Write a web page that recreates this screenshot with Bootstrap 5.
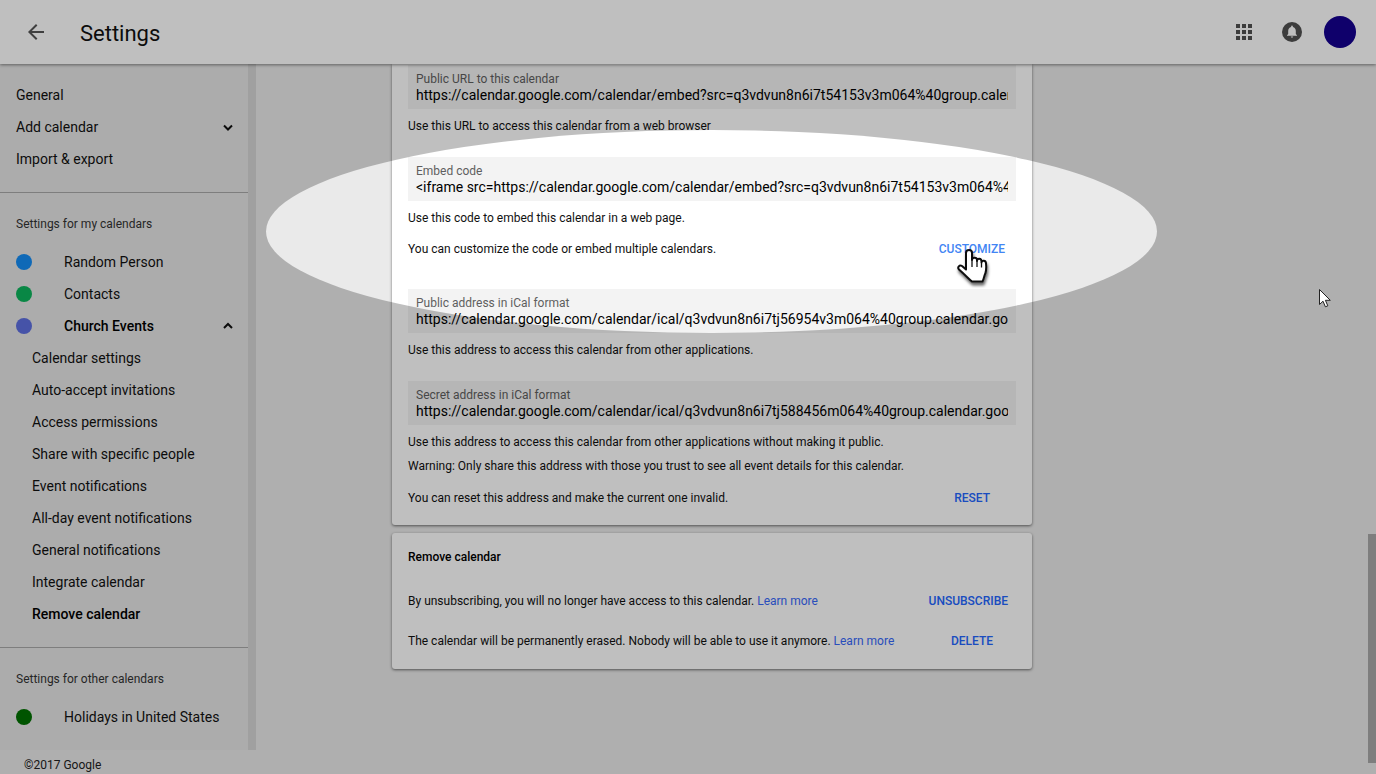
<!DOCTYPE html>
<html lang="en">
<head>
<meta charset="utf-8">
<title>Settings</title>
<link href="https://cdn.jsdelivr.net/npm/bootstrap@5.3.0/dist/css/bootstrap.min.css" rel="stylesheet">
<style>
html,body{height:100%;}
body{font-family:Roboto,"Liberation Sans",sans-serif;font-size:14px;color:#111;background:#eaeaea;overflow:hidden;position:relative;}
.shell{height:774px;}
.topbar{height:64px;background:#fff;padding:0 20px 0 16px;box-shadow:0 1px 3px rgba(0,0,0,.45);z-index:2;flex:none;}
.topbar h1{font-size:22px;font-weight:400;margin:3px 0 0 24px;line-height:62px;color:#111;}
.backbtn{width:40px;display:flex;justify-content:center;}
.appicons{gap:24px;}
.avatar{width:32px;height:32px;border-radius:50%;background:#14008f;margin-left:-4px;}
.sidecol{width:256px;flex:none;}
.sidewrap{height:686px;}
.sidenav{width:248px;background:#e6e6e6;padding-top:15px;flex:none;}
.sidetrack{width:8px;background:#d6d6d6;flex:none;}
.sideitem{height:32px;padding:0 8px 0 16px;display:flex;align-items:center;justify-content:space-between;color:#111;text-decoration:none;}
.sideitem.sub{padding-left:32px;}
.sideitem.strong{font-weight:500;color:#000;}
.withdot{justify-content:flex-start;}
.dot{width:16px;height:16px;border-radius:50%;margin-right:32px;flex:none;}
.sidehr{border:0;border-top:1px solid #a8a8a8;margin:17px 0 0;opacity:1;}
.sidehead{font-size:12px;color:#333;padding:0 16px;line-height:16px;margin:23px 0 14px;}
.foot{font-size:12px;color:#222;padding-left:24px;line-height:30px;}
.mainscroll{padding-left:136px;position:relative;}
.panel{width:640px;background:#fff;box-shadow:0 1px 3px rgba(0,0,0,.55);padding:1px 16px 0;border-radius:0 0 3px 3px;}
.panel2{margin-top:8px;border-radius:3px;height:136px;padding-top:0;}
.field{background:#f3f3f3;height:44px;padding:6px 8px 0;width:608px;}
.field label{display:block;font-size:12px;line-height:16px;color:#5f5f5f;margin:0 0 -1px;}
.field div{font-size:14px;line-height:18px;color:#000;white-space:nowrap;overflow:hidden;}
.hint{font-size:12px;line-height:16px;color:#111;}
.hintrow{height:32px;margin-top:7px;}
.actionbtn{font-size:12px;font-weight:500;color:#2366ff;text-decoration:none;text-align:center;}
.actionbtn.lit{color:#4285f4;margin-right:11px;}
.inlinelink{color:#3768fa;text-decoration:none;}
.paneltitle{font-size:12px;font-weight:500;color:#000;line-height:16px;padding-top:16px;}
.thumb{position:absolute;left:1368px;right:0;top:534px;height:229px;background:#a8a8a8;}
.spot{position:absolute;left:266px;top:130px;width:891px;height:203px;border-radius:50%;box-shadow:0 0 0 1400px rgba(0,0,0,.25);z-index:5;pointer-events:none;}
.spotclip{position:absolute;inset:0;overflow:hidden;z-index:5;pointer-events:none;}
.cursor{position:absolute;z-index:6;}
.handpos{left:950px;top:245px;}
.arrowpos{left:1318px;top:288px;}
.gap8{margin-top:8px;}
.gap9{margin-top:9px;}
.gap23{margin-top:23px;}
</style>
</head>
<body>
<div class="shell d-flex flex-column">
  <header class="topbar d-flex align-items-center">
    <span class="backbtn"><svg width="24" height="24" viewBox="0 0 24 24" fill="#555"><path d="M20 11H7.830l5.590-5.590L12 4l-8 8 8 8 1.410-1.410L7.830 13H20z"/></svg></span>
    <h1>Settings</h1>
    <div class="d-flex align-items-center appicons ms-auto">
      <svg width="24" height="24" viewBox="0 0 24 24" fill="#505050"><path d="M4 8h4V4H4zm6 12h4v-4h-4zm-6 0h4v-4H4zm0-6h4v-4H4zm6 0h4v-4h-4zm6-10v4h4V4zm-6 4h4V4h-4zm6 6h4v-4h-4zm0 6h4v-4h-4z"/></svg>
      <svg width="24" height="24" viewBox="0 0 24 24"><circle cx="12" cy="12" r="10" fill="#505050"/><path fill="#fff" d="M12 5.600c-.5 0-.9.4-.9.9v.4C9.300 7.300 8.200 8.900 8.200 10.800v3.200L7 15.200v.6h10v-.6L15.800 14v-3.200c0-1.900-1.100-3.500-2.900-3.900v-.4c0-.5-.4-.9-.9-.9zM10.800 16.600c0 .7.5 1.200 1.200 1.200s1.200-.5 1.200-1.200z"/></svg>
      <span class="avatar"></span>
    </div>
  </header>
  <div class="d-flex flex-grow-1">
    <div class="sidecol d-flex flex-column">
      <div class="sidewrap d-flex">
        <nav class="sidenav">
          <a class="sideitem">General</a>
          <a class="sideitem">Add calendar <svg width="24" height="24" viewBox="0 0 24 24" fill="none" stroke="#111" stroke-width="2"><path d="M8 10.500l4 4 4-4"/></svg></a>
          <a class="sideitem">Import &amp; export</a>
          <hr class="sidehr">
          <div class="sidehead">Settings for my calendars</div>
          <a class="sideitem withdot"><span class="dot" style="background:#148df5"></span>Random Person</a>
          <a class="sideitem withdot"><span class="dot" style="background:#0db55c"></span>Contacts</a>
          <a class="sideitem"><span class="d-flex align-items-center fw-medium text-black"><span class="dot" style="background:#5e6fe0"></span>Church Events</span><svg width="24" height="24" viewBox="0 0 24 24" fill="none" stroke="#111" stroke-width="2"><path d="M8 14l4-4 4 4"/></svg></a>
          <a class="sideitem sub">Calendar settings</a>
          <a class="sideitem sub">Auto-accept invitations</a>
          <a class="sideitem sub">Access permissions</a>
          <a class="sideitem sub">Share with specific people</a>
          <a class="sideitem sub">Event notifications</a>
          <a class="sideitem sub">All-day event notifications</a>
          <a class="sideitem sub">General notifications</a>
          <a class="sideitem sub">Integrate calendar</a>
          <a class="sideitem sub strong">Remove calendar</a>
          <hr class="sidehr">
          <div class="sidehead">Settings for other calendars</div>
          <a class="sideitem withdot"><span class="dot" style="background:#007000"></span>Holidays in United States</a>
        </nav>
        <div class="sidetrack"></div>
      </div>
      <footer class="foot">©2017 Google</footer>
    </div>
    <main class="mainscroll flex-grow-1">
      <section class="panel">
        <div class="field"><label>Public URL to this calendar</label><div>https://calendar.google.com/calendar/embed?src=q3vdvun8n6i7t54153v3m064%40group.calendar.google.com</div></div>
        <div class="hint gap9">Use this URL to access this calendar from a web browser</div>
        <div class="field gap23"><label>Embed code</label><div>&lt;iframe src=https://calendar.google.com/calendar/embed?src=q3vdvun8n6i7t54153v3m064%40group.calendar.google.com</div></div>
        <div class="hint gap9">Use this code to embed this calendar in a web page.</div>
        <div class="d-flex justify-content-between align-items-center hintrow"><span class="hint">You can customize the code or embed multiple calendars.</span><a class="actionbtn lit">CUSTOMIZE</a></div>
        <div class="field mt-4"><label>Public address in iCal format</label><div>https://calendar.google.com/calendar/ical/q3vdvun8n6i7tj56954v3m064%40group.calendar.google.com</div></div>
        <div class="hint gap9">Use this address to access this calendar from other applications.</div>
        <div class="field gap23"><label>Secret address in iCal format</label><div>https://calendar.google.com/calendar/ical/q3vdvun8n6i7tj588456m064%40group.calendar.google.com</div></div>
        <div class="hint gap9">Use this address to access this calendar from other applications without making it public.</div>
        <div class="hint gap8">Warning: Only share this address with those you trust to see all event details for this calendar.</div>
        <div class="d-flex justify-content-between align-items-center gap8" style="padding-bottom:12px;height:43px"><span class="hint">You can reset this address and make the current one invalid.</span><a class="actionbtn" style="margin-right:26px">RESET</a></div>
      </section>
      <section class="panel panel2">
        <div class="paneltitle">Remove calendar</div>
        <div class="d-flex justify-content-between align-items-center hint" style="margin-top:20px;height:32px"><span>By unsubscribing, you will no longer have access to this calendar. <a class="inlinelink">Learn more</a></span><a class="actionbtn me-2">UNSUBSCRIBE</a></div>
        <div class="d-flex justify-content-between align-items-center hint gap8" style="height:32px"><span>The calendar will be permanently erased. Nobody will be able to use it anymore. <a class="inlinelink">Learn more</a></span><a class="actionbtn" style="margin-right:23px">DELETE</a></div>
      </section>
    </main>
  </div>
</div>
<div class="thumb"></div>
<div class="spotclip"><div class="spot"></div></div>
<svg class="cursor handpos" width="44" height="50" viewBox="0 0 44 50">
  <defs><filter id="cs" x="-30%" y="-30%" width="160%" height="160%"><feDropShadow dx="1" dy="3" stdDeviation="1.800" flood-color="#000" flood-opacity=".6"/></filter></defs>
  <path filter="url(#cs)" fill="#fff" stroke="#111" stroke-width="2" stroke-linejoin="round" d="M16 8c0-4 6-4 6 0V15c0-3 5-3 5 0v1c0-3 4.500-3 4.500.5v1c0-2.500 4.500-2.500 4.500 1 .5 5 0 9-1.500 12-.5 2-1 4-2 6H22c-3-2-6-6-13-12-2-2 .5-5 3-3.500l4 3.500z"/>
  <path fill="none" stroke="#111" stroke-width="1.300" d="M22 15v7M27 16v6M31.500 17.500v5"/>
</svg>
<svg class="cursor arrowpos" width="15" height="21" viewBox="0 0 15 21">
  <path fill="#fff" stroke="#222" stroke-width="1" d="M1.500 1.500v15l3.500-3.300 2.400 5.600 2.400-1-2.400-5.500h4.900z"/>
</svg>
<script src="https://cdn.jsdelivr.net/npm/bootstrap@5.3.0/dist/js/bootstrap.bundle.min.js"></script>
</body>
</html>
